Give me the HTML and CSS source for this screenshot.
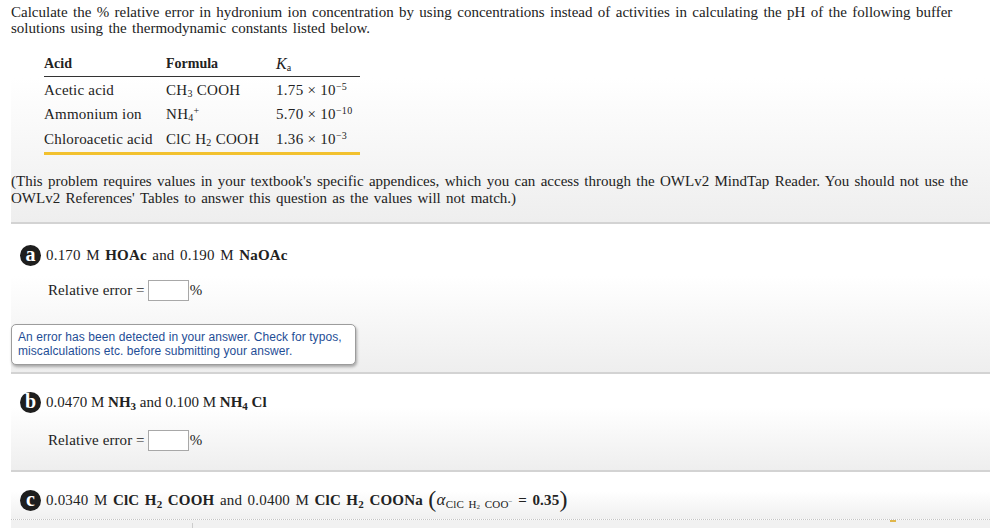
FILE: index.html
```html
<!DOCTYPE html>
<html>
<head>
<meta charset="utf-8">
<link rel="stylesheet" href="styles.css">
</head>
<body>
<div class="page">
  <section class="block intro">
    <p class="lead">Calculate the % relative error in hydronium ion concentration by using concentrations instead of activities in calculating the pH of the following buffer solutions using the thermodynamic constants listed below.</p>
    <table class="ka">
      <thead>
        <tr><th class="c1">Acid</th><th class="c2">Formula</th><th class="c3"><i>K</i><sub>a</sub></th></tr>
      </thead>
      <tbody>
        <tr><td>Acetic acid</td><td class="m">CH<sub>3</sub> COOH</td><td class="m">1.75 × 10<sup>−5</sup></td></tr>
        <tr><td>Ammonium ion</td><td class="m">NH<sub>4</sub><sup class="plus">+</sup></td><td class="m">5.70 × 10<sup>−10</sup></td></tr>
        <tr><td>Chloroacetic acid</td><td class="m">ClC H<sub>2</sub> COOH</td><td class="m">1.36 × 10<sup>−3</sup></td></tr>
      </tbody>
    </table>
    <p class="note">(This problem requires values in your textbook's specific appendices, which you can access through the OWLv2 MindTap Reader. You should not use the OWLv2 References' Tables to answer this question as the values will not match.)</p>
  </section>

  <section class="block part part-a">
    <div class="q"><span class="badge">a</span><span class="qt">0.170 M <b>HOAc</b> and 0.190 M <b>NaOAc</b></span></div>
    <div class="ans">Relative error =<span class="box"></span>%</div>
    <div class="err">An error has been detected in your answer. Check for typos, miscalculations etc. before submitting your answer.</div>
  </section>

  <section class="block part part-b">
    <div class="q"><span class="badge">b</span><span class="qt qt-tight">0.0470 M <b>NH<sub>3</sub></b> and 0.100 M <b>NH<sub>4</sub> Cl</b></span></div>
    <div class="ans">Relative error =<span class="box"></span>%</div>
  </section>

  <section class="block part part-c">
    <div class="q"><span class="badge">c</span><span class="qt">0.0340 M <b>ClC H<sub>2</sub> COOH</b> and 0.0400 M <b>ClC H<sub>2</sub> COONa</b> <span class="paren">(</span><i class="alpha">α</i><sub class="asub">ClC H<sub>2</sub> COO<sup>−</sup></sub> <b>= 0.35</b><span class="paren">)</span></span></div>
  </section>
  <div class="footer"><span class="tick"></span><span class="mark"></span></div>
</div>
</body>
</html>
```
FILE: styles.css
```css
html, body {
  margin: 0;
  padding: 0;
  background: #ffffff;
}
body {
  font-family: "Liberation Serif", "Times New Roman", serif;
  font-size: 15px;
  color: #222;
  width: 990px;
  height: 528px;
  overflow: hidden;
}
.page {
  padding-left: 11px;
}
.block {
  background: linear-gradient(to bottom, #ffffff 0%, #ffffff 35%, #eeeeee 100%);
  border-bottom: 2px solid #d3d3d3;
}
.intro {
  height: 224px;
  box-sizing: border-box;
  padding-top: 4px;
}
.lead {
  margin: 0;
  line-height: 16px;
  word-spacing: 1.6px;
  padding-right: 20px;
}
.ka {
  border-collapse: collapse;
  margin: 19px 0 0 33px;
  font-size: 15px;
}
.ka th {
  text-align: left;
  font-weight: bold;
  font-size: 14px;
  padding: 0 0 3px 0;
  height: 15px;
  border-bottom: 1px solid #333;
}
.ka th.c3 { font-weight: normal; font-size: 16px; }
.ka th.c3 sub { font-size: 10px; }
.ka .c1 { width: 122px; }
.ka .c2 { width: 110px; }
.ka .c3 { width: 84px; }
.ka td {
  padding: 0;
  height: 24px;
  vertical-align: middle;
  letter-spacing: 0.2px;
  white-space: nowrap;
}
.ka tbody tr:first-child td { padding-top: 1px; }
.ka tbody tr:last-child td {
  border-bottom: 3px solid #f2c12e;
  height: 26px;
}
.ka td.m { font-size: 15px; letter-spacing: 0.3px; }
.ka sub, .ka sup { font-size: 10px; }
.ka sup { vertical-align: 5px; }
.ka sub { vertical-align: -2px; }
.note {
  margin: 18px 0 0 0;
  line-height: 17px;
  word-spacing: 1.6px;
  padding-right: 8px;
}
.part {
  box-sizing: border-box;
}
.part-a { height: 150px; padding-top: 21px; }
.part-b { height: 98px; padding-top: 18px; }
.part-c { height: 48px; padding-top: 18px; border-bottom: 1px dotted #c4c4c4; background: linear-gradient(to bottom, #ffffff 0%, #ffffff 40%, #f0f0f0 100%); }
.part-b .ans { margin-top: 17px; }
.q {
  display: flex;
  align-items: center;
  height: 21px;
  margin-left: 9px;
  white-space: nowrap;
}
.badge {
  width: 21px;
  height: 21px;
  border-radius: 50%;
  background: #1e1e1e;
  color: #fff;
  font-weight: bold;
  font-size: 20px;
  line-height: 19px;
  text-align: center;
  margin-right: 5px;
  flex: none;
}
.qt { word-spacing: 1.5px; letter-spacing: 0.2px; }
.qt-tight { word-spacing: 0; letter-spacing: 0; }
.qt b { font-weight: bold; }
.qt sub { font-size: 11px; vertical-align: -3px; }
.ans {
  display: flex;
  align-items: center;
  margin: 14px 0 0 37px;
  height: 21px;
  letter-spacing: 0.1px;
}
.box {
  display: inline-block;
  width: 39px;
  height: 19px;
  border: 1px solid #a8a8a8;
  background: #fff;
  margin-left: 3px;
  margin-right: 1px;
}
.err {
  margin-top: 23px;
  width: 331px;
  border: 1px solid #9c9c9c;
  border-radius: 5px;
  box-shadow: 1px 2px 3px rgba(0,0,0,0.3);
  background: #fff;
  color: #1f4e96;
  font-family: "Liberation Sans", Arial, sans-serif;
  font-size: 12px;
  letter-spacing: 0.07px;
  line-height: 14px;
  padding: 5px 6px 6px 6px;
}
.paren { font-size: 24px; line-height: 18px; vertical-align: -2px; }
.alpha { font-size: 17px; }
.asub { font-size: 10px; vertical-align: -3px; }
.asub sub { font-size: 7px; vertical-align: -1px; }
.asub sup { font-size: 7px; vertical-align: 4px; }
.footer {
  position: relative;
  height: 10px;
  background: #f1f1f1;
}
.tick {
  position: absolute;
  left: 181px;
  top: 3px;
  width: 1px;
  height: 6px;
  background: #ccc;
}
.mark {
  position: absolute;
  left: 879px;
  top: 0;
  width: 6px;
  height: 2px;
  background: #e0b64a;
}
```
